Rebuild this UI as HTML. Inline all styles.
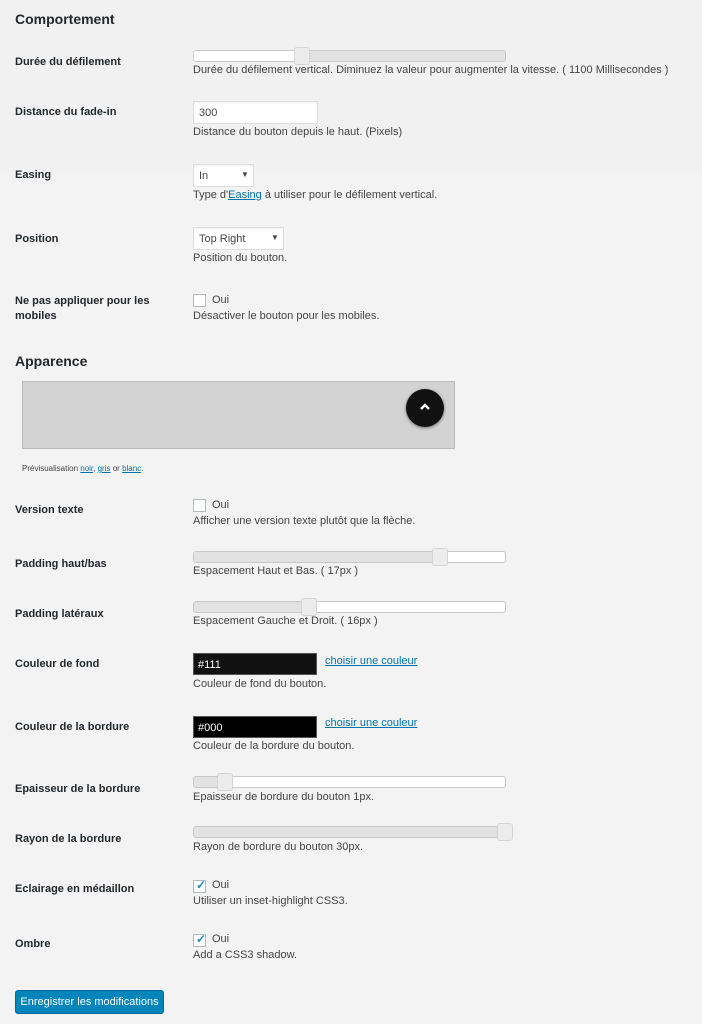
<!DOCTYPE html>
<html><head><meta charset="utf-8"><style>
body{margin:0;width:702px;height:1024px;background:#f3f3f3;font-family:"Liberation Sans",sans-serif;font-size:11px;color:#444;position:relative;overflow:hidden}
.a{position:absolute;line-height:14px;white-space:nowrap;transform:translateY(1px)}
.top{position:absolute;left:0;top:0;width:702px;height:172px;background:#f1f1f1}
.h{font-size:14px;font-weight:bold;color:#23282d;line-height:18px}
.l{font-weight:bold;color:#23282d}
.tr{position:absolute;height:10px;border:1px solid #c8c8c8;border-radius:3px;background:#fff;overflow:hidden}
.g{position:absolute;top:0;height:10px;background:#e2e2e2}
.th{position:absolute;width:14px;height:16px;background:#ececec;border:1px solid #d4d4d4;border-radius:3px}
.in{position:absolute;background:#fff;border:1px solid #ddd;box-shadow:inset 0 1px 2px rgba(0,0,0,.07)}
.cb{position:absolute;width:11px;height:11px;background:#fff;border:1px solid #b4b9be}
a{color:#0073aa;text-decoration:underline}
.ck{position:absolute;left:2px;top:-3px;color:#1e8cbe;font-size:12px;font-weight:bold}
</style></head><body>
<div class="top"></div>
<div class="a h" style="left:15px;top:9px">Comportement</div>

<div class="a l" style="left:15px;top:54px">Durée du défilement</div>
<div class="tr" style="left:193px;top:50px;width:311px"><div class="g" style="left:108px;right:0"></div></div>
<div class="th" style="left:294px;top:47px"></div>
<div class="a" style="left:193px;top:62px">Durée du défilement vertical. Diminuez la valeur pour augmenter la vitesse. ( 1100 Millisecondes )</div>

<div class="a l" style="left:15px;top:104px">Distance du fade-in</div>
<div class="in" style="left:193px;top:101px;width:123px;height:21px"></div>
<div class="a" style="left:199px;top:105px">300</div>
<div class="a" style="left:193px;top:124px">Distance du bouton depuis le haut. (Pixels)</div>

<div class="a l" style="left:15px;top:167px">Easing</div>
<div class="in" style="left:193px;top:164px;width:59px;height:21px"></div>
<div class="a" style="left:199px;top:168px">In</div>
<div class="a" style="left:241px;top:167px;font-size:8px">▼</div>
<div class="a" style="left:193px;top:187px">Type d'<a>Easing</a> à utiliser pour le défilement vertical.</div>

<div class="a l" style="left:15px;top:231px">Position</div>
<div class="in" style="left:193px;top:227px;width:89px;height:21px"></div>
<div class="a" style="left:199px;top:231px">Top Right</div>
<div class="a" style="left:271px;top:230px;font-size:8px">▼</div>
<div class="a" style="left:193px;top:250px">Position du bouton.</div>

<div class="a l" style="left:15px;top:293px">Ne pas appliquer pour les</div>
<div class="a l" style="left:15px;top:308px">mobiles</div>
<div class="cb" style="left:193px;top:294px"></div>
<div class="a" style="left:212px;top:292px">Oui</div>
<div class="a" style="left:193px;top:308px">Désactiver le bouton pour les mobiles.</div>

<div class="a h" style="left:15px;top:351px">Apparence</div>
<div style="position:absolute;left:22px;top:381px;width:431px;height:66px;background:#d3d3d3;border:1px solid #bbb"></div>
<div style="position:absolute;left:406px;top:389px;width:38px;height:38px;border-radius:50%;background:#111;box-shadow:0 1px 3px rgba(0,0,0,.5)"></div>
<svg style="position:absolute;left:419px;top:402px" width="12" height="10"><path d="M2 7 L6 3 L10 7" stroke="#fff" stroke-width="2.4" fill="none"/></svg>
<div class="a" style="left:22px;top:461px;font-size:8px">Prévisualisation <a>noir</a>, <a>gris</a> or <a>blanc</a>.</div>

<div class="a l" style="left:15px;top:502px">Version texte</div>
<div class="cb" style="left:193px;top:499px"></div>
<div class="a" style="left:212px;top:497px">Oui</div>
<div class="a" style="left:193px;top:513px">Afficher une version texte plutôt que la flèche.</div>

<div class="a l" style="left:15px;top:556px">Padding haut/bas</div>
<div class="tr" style="left:193px;top:551px;width:311px"><div class="g" style="left:0;width:246px"></div></div>
<div class="th" style="left:432px;top:548px"></div>
<div class="a" style="left:193px;top:563px">Espacement Haut et Bas. ( 17px )</div>

<div class="a l" style="left:15px;top:606px">Padding latéraux</div>
<div class="tr" style="left:193px;top:601px;width:311px"><div class="g" style="left:0;width:115px"></div></div>
<div class="th" style="left:301px;top:598px"></div>
<div class="a" style="left:193px;top:613px">Espacement Gauche et Droit. ( 16px )</div>

<div class="a l" style="left:15px;top:656px">Couleur de fond</div>
<div style="position:absolute;left:193px;top:653px;width:122px;height:20px;background:#111;border:1px solid #555"></div>
<div class="a" style="left:198px;top:657px;color:#fff">#111</div>
<div class="a" style="left:325px;top:653px"><a>choisir une couleur</a></div>
<div class="a" style="left:193px;top:676px">Couleur de fond du bouton.</div>

<div class="a l" style="left:15px;top:719px">Couleur de la bordure</div>
<div style="position:absolute;left:193px;top:716px;width:122px;height:20px;background:#000;border:1px solid #555"></div>
<div class="a" style="left:198px;top:720px;color:#fff">#000</div>
<div class="a" style="left:325px;top:715px"><a>choisir une couleur</a></div>
<div class="a" style="left:193px;top:738px">Couleur de la bordure du bouton.</div>

<div class="a l" style="left:15px;top:781px">Epaisseur de la bordure</div>
<div class="tr" style="left:193px;top:776px;width:311px"><div class="g" style="left:0;width:30px"></div></div>
<div class="th" style="left:217px;top:773px"></div>
<div class="a" style="left:193px;top:789px">Epaisseur de bordure du bouton 1px.</div>

<div class="a l" style="left:15px;top:831px">Rayon de la bordure</div>
<div class="tr" style="left:193px;top:826px;width:311px"><div class="g" style="left:0;right:0"></div></div>
<div class="th" style="left:497px;top:823px"></div>
<div class="a" style="left:193px;top:839px">Rayon de bordure du bouton 30px.</div>

<div class="a l" style="left:15px;top:881px">Eclairage en médaillon</div>
<div class="cb" style="left:193px;top:880px"><span class="ck">✓</span></div>
<div class="a" style="left:212px;top:877px">Oui</div>
<div class="a" style="left:193px;top:893px">Utiliser un inset-highlight CSS3.</div>

<div class="a l" style="left:15px;top:936px">Ombre</div>
<div class="cb" style="left:193px;top:934px"><span class="ck">✓</span></div>
<div class="a" style="left:212px;top:931px">Oui</div>
<div class="a" style="left:193px;top:947px">Add a CSS3 shadow.</div>

<div style="position:absolute;left:15px;top:990px;width:147px;height:22px;background:#0085ba;border:1px solid #006799;border-radius:3px;color:#fff;line-height:22px;text-align:center;font-size:11px">Enregistrer les modifications</div>
</body></html>
